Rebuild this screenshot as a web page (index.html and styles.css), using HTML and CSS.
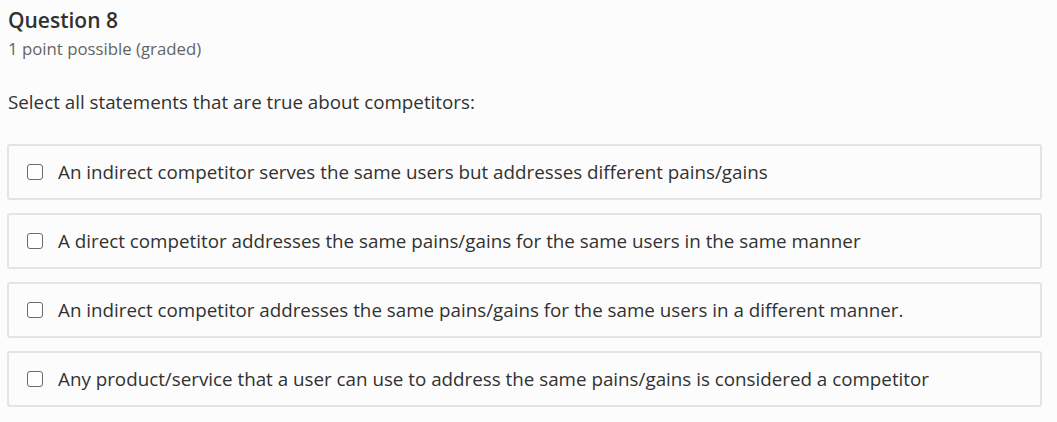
FILE: index.html
```html
<!DOCTYPE html>
<html lang="en">
<head>
    <meta charset="UTF-8">
    <meta name="viewport" content="width=device-width, initial-scale=1.0">
    <title>Question 8</title>
    <link rel="stylesheet" href="styles.css">
</head>
<body>
    <div class="problem">
        <h3 class="problem-header">Question 8</h3>
        <div class="problem-progress">1 point possible (graded)</div>

        <p class="prompt">Select all statements that are true about competitors:</p>

        <fieldset class="choices">
            <label class="choice">
                <input type="checkbox" name="q8" value="a">
                <span>An indirect competitor serves the same users but addresses different pains/gains</span>
            </label>
            <label class="choice">
                <input type="checkbox" name="q8" value="b">
                <span>A direct competitor addresses the same pains/gains for the same users in the same manner</span>
            </label>
            <label class="choice">
                <input type="checkbox" name="q8" value="c">
                <span>An indirect competitor addresses the same pains/gains for the same users in a different manner.</span>
            </label>
            <label class="choice">
                <input type="checkbox" name="q8" value="d">
                <span>Any product/service that a user can use to address the same pains/gains is considered a competitor</span>
            </label>
        </fieldset>
    </div>
</body>
</html>
```

FILE: styles.css
```css
* {
    margin: 0;
    padding: 0;
    box-sizing: border-box;
}

body {
    font-family: 'Open Sans', 'Noto Sans', sans-serif;
    background: #fcfcfc;
    color: #313131;
}

.problem {
    padding: 5px 15px 0 8px;
}

.problem-header {
    font-size: 21px;
    font-weight: 600;
    color: #313131;
    line-height: 30px;
}

.problem-progress {
    font-size: 16.8px;
    color: #646464;
    line-height: 22px;
    margin-top: 3px;
}

.prompt {
    font-size: 18.8px;
    line-height: 26px;
    margin-top: 29px;
}

.choices {
    border: none;
    margin-top: 29px;
    margin-left: -1px;
    display: flex;
    flex-direction: column;
    gap: 13px;
}

.choice {
    display: flex;
    align-items: center;
    gap: 15px;
    height: 56px;
    padding: 0 18px;
    border: 2px solid #e4e4e4;
    border-radius: 3px;
    background: #fcfcfc;
    font-size: 18.8px;
    cursor: pointer;
}

.choice input {
    width: 16px;
    height: 16px;
    margin: 0;
    flex-shrink: 0;
    appearance: none;
    border: 1px solid #6b6b6b;
    border-radius: 3px;
    background: #fff;
}
```
